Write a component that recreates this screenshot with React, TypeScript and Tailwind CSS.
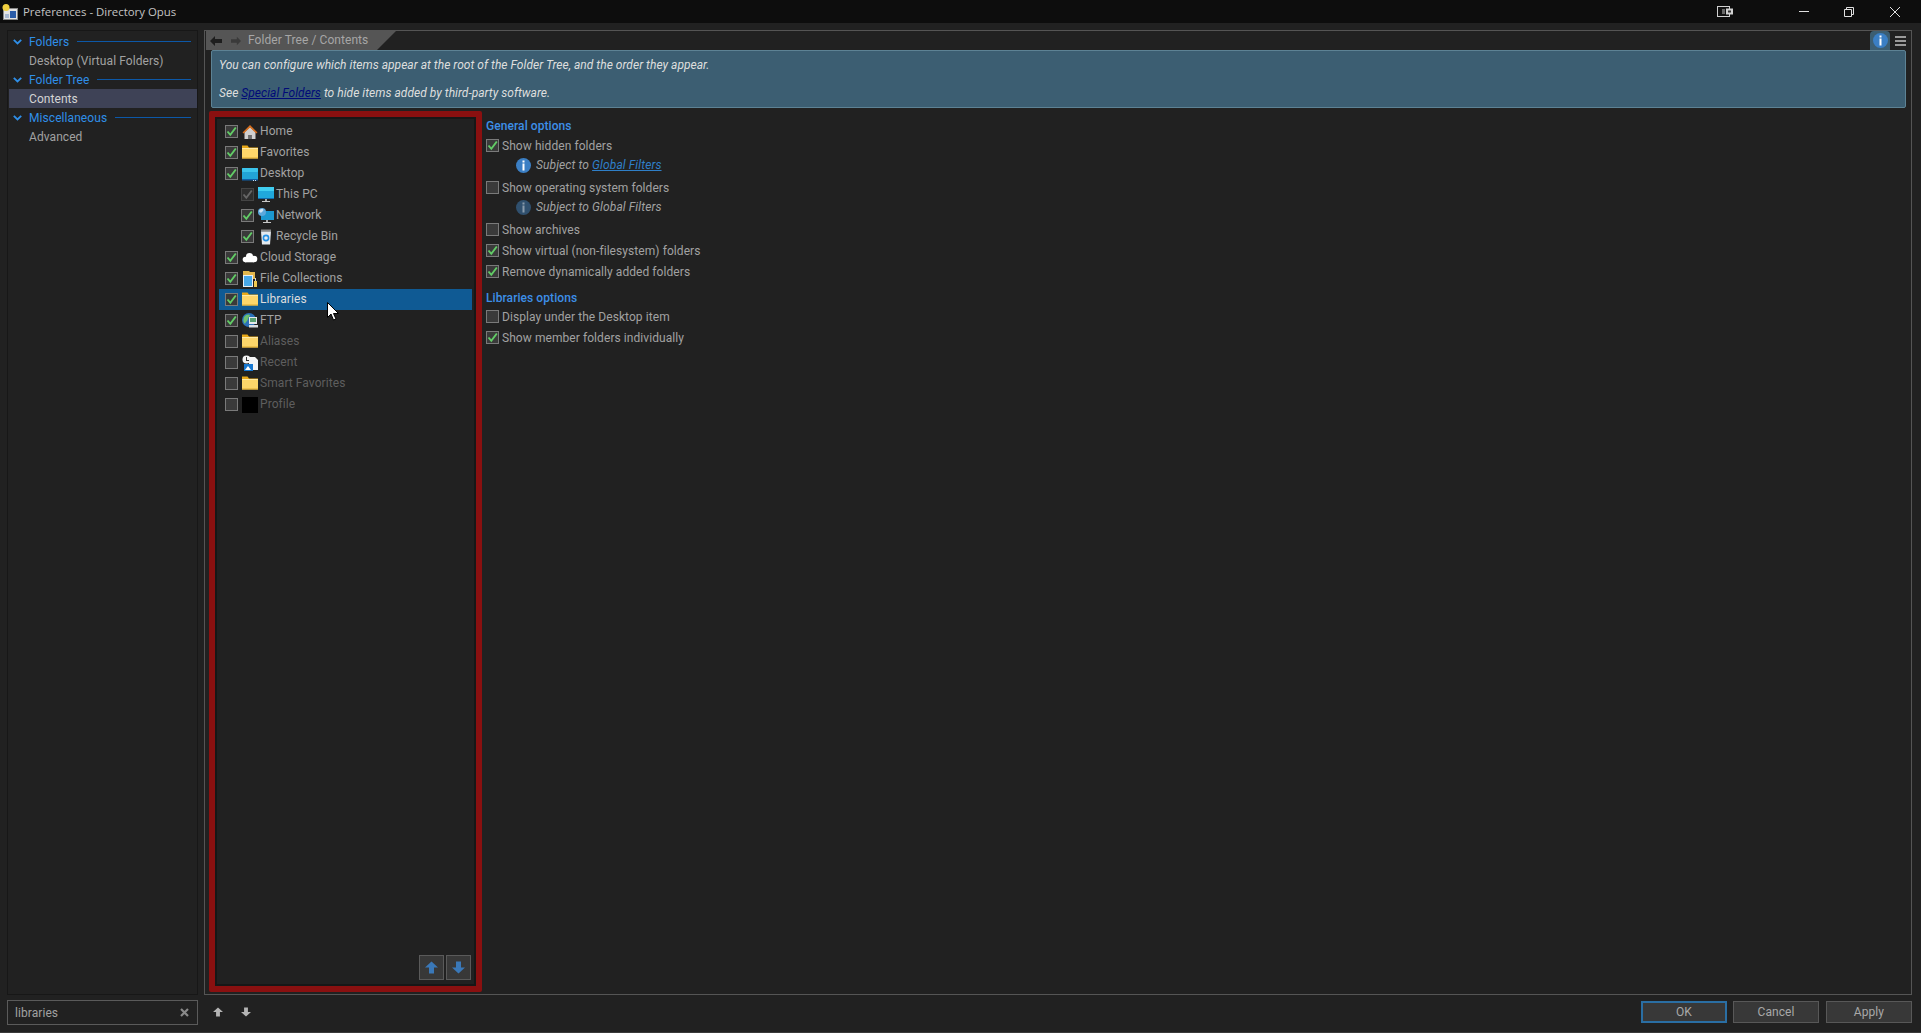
import type { ReactNode } from "react";

// small pictures used by the tree
const HomeIcon = () => (
  <svg width="16" height="16" viewBox="0 0 16 16">
    <path d="M2.500 8v7h4v-4h3v4h4V8L8 3z" fill="#d0d0d0" />
    <path d="M0.500 8.500 8 1l7.500 7.500-1.200 1L8 3.500 1.700 9.500z" fill="#d9701e" />
    <rect x="6.500" y="11" width="3" height="4" fill="#6c6c6c" />
  </svg>
);

const FolderIcon = () => (
  <svg width="16" height="16" viewBox="0 0 16 16">
    <path d="M0 0.500h5.500l1.500 2h9v1H0z" fill="#e8a818" />
    <rect x="0" y="3" width="16" height="10.500" fill="#fdd66a" />
    <rect x="0" y="3" width="16" height="1" fill="#ffe9a4" />
    <rect x="0" y="12.500" width="16" height="1" fill="#e0ac30" />
  </svg>
);

const DesktopIcon = () => (
  <svg width="16" height="16" viewBox="0 0 16 16">
    <rect x="0" y="2" width="16" height="12" rx="1" fill="#22a4d8" />
    <rect x="0" y="2" width="16" height="4" rx="1" fill="#3cc4ec" />
    <rect x="0" y="13" width="16" height="1.500" fill="#1060a8" />
    <rect x="11" y="14" width="1" height="1" fill="#cde" />
    <rect x="13" y="14" width="1" height="1" fill="#cde" />
  </svg>
);

const MonitorIcon = () => (
  <svg width="16" height="16" viewBox="0 0 16 16">
    <rect x="0" y="0" width="16" height="12" fill="#20a8dc" />
    <rect x="0" y="0" width="16" height="4" fill="#40cdf0" />
    <rect x="0" y="11" width="16" height="1" fill="#1068a8" />
    <rect x="7" y="12" width="2" height="2" fill="#a8a8a8" />
    <rect x="4" y="14" width="8" height="1" fill="#c8c8c8" />
  </svg>
);

const NetworkIcon = () => (
  <svg width="16" height="16" viewBox="0 0 16 16">
    <rect x="3" y="3" width="13" height="9" fill="#1c98d0" />
    <rect x="8" y="12" width="2" height="2" fill="#a8a8a8" />
    <rect x="5" y="14" width="8" height="1" fill="#c8c8c8" />
    <circle cx="4" cy="4" r="4" fill="#5ca8dc" />
    <path d="M1 3c1-2 3-2.500 4-2 1 1 0 2-1 3S2 5 1 3z" fill="#cfe4f4" />
  </svg>
);

const RecycleIcon = () => (
  <svg width="16" height="16" viewBox="0 0 16 16">
    <rect x="3" y="0.500" width="10" height="2" fill="#8a8a8a" />
    <path d="M3 2.500h10l-1 13H4z" fill="#e4e9ee" />
    <circle cx="8" cy="9" r="2.600" fill="none" stroke="#2490e4" strokeWidth="1.600" />
  </svg>
);

const CloudIcon = () => (
  <svg width="16" height="16" viewBox="0 0 16 16">
    <circle cx="3.500" cy="9.500" r="2.800" fill="#fff" />
    <circle cx="7.500" cy="6.500" r="3.500" fill="#fff" />
    <circle cx="12" cy="9" r="3.300" fill="#fff" />
    <rect x="3" y="8" width="9" height="4.300" fill="#fff" />
  </svg>
);

const CollectionIcon = () => (
  <svg width="16" height="16" viewBox="0 0 16 16">
    <path d="M1 3V0h6l1 1h5v7h-2v8H1z" fill="#e2b64c" />
    <rect x="1" y="4" width="10" height="12" fill="#e8eef2" />
    <rect x="2" y="5" width="8" height="10" fill="#48a8e8" />
    <rect x="12" y="10" width="3" height="6" fill="#f0c850" />
    <rect x="13" y="7" width="1" height="3" fill="#d8d8d8" />
  </svg>
);

const FtpIcon = () => (
  <svg width="16" height="16" viewBox="0 0 16 16">
    <circle cx="7" cy="7" r="7" fill="#2a70b8" />
    <path d="M2 4c2-3 5-3 6-2 0 2-2 2-2 4s-3 3-3 5c-2-2-2-4-1-7z" fill="#6cc070" />
    <rect x="7" y="4" width="8" height="7" fill="#e4e8ea" />
    <rect x="8" y="5" width="6" height="4" fill="#58a070" />
    <rect x="7" y="12" width="9" height="2.500" fill="#d8dce0" />
  </svg>
);

const RecentIcon = () => (
  <svg width="16" height="16" viewBox="0 0 16 16">
    <path d="M7 2h6l3 3v10H7z" fill="#f4f4f4" />
    <circle cx="4.500" cy="4.500" r="4" fill="#f4f4f4" />
    <path d="M4 2h1v3h2v1H4z" fill="#333" />
    <rect x="2" y="9" width="9" height="7" fill="#1878d0" />
    <path d="M3 15l3-4 3 4z" fill="#fff" />
  </svg>
);

const BlackIcon = () => <div className="h-4 w-4 bg-black" />;

const InfoDot = ({ dim }: { dim?: boolean }) => (
  <svg width="15" height="15" viewBox="0 0 15 15">
    <circle cx="7.500" cy="7.500" r="7.500" fill={dim ? "#30506e" : "#3b7fc4"} />
    <rect x="6.500" y="2.500" width="2" height="2" fill={dim ? "#8a9bab" : "#fff"} />
    <rect x="6.500" y="5.500" width="2" height="7" fill={dim ? "#8a9bab" : "#fff"} />
  </svg>
);

const Chevron = () => (
  <svg width="9" height="6" viewBox="0 0 9 6" className="ml-1 mr-[7px] shrink-0">
    <path d="M0.800 0.800 4.500 4.500 8.200 0.800" fill="none" stroke="#2f8fe8" strokeWidth="1.800" />
  </svg>
);

const Check = ({ on, muted }: { on: boolean; muted?: boolean }) => (
  <div
    className={
      muted
        ? "flex h-[13px] w-[13px] shrink-0 items-center justify-center border border-[#444444] bg-[#2e2e2e]"
        : "flex h-[13px] w-[13px] shrink-0 items-center justify-center border border-[#7a7a7a] bg-[#3a3a3a]"
    }
  >
    {on && (
      <svg width="11" height="11" viewBox="0 0 11 11">
        <path d="M1.500 5.500 4.300 8.800 9.800 1.500" fill="none" stroke={muted ? "#666666" : "#62cc66"} strokeWidth="1.900" />
      </svg>
    )}
  </div>
);

const UpArrow = ({ color, size = 13 }: { color: string; size?: number }) => (
  <svg width={size} height={size} viewBox="0 0 13 13">
    <path d="M6.500 0.500 13 6.500H9V12.500H4V6.500H0z" fill={color} />
  </svg>
);

const DownArrow = ({ color, size = 13 }: { color: string; size?: number }) => (
  <svg width={size} height={size} viewBox="0 0 13 13">
    <path d="M6.500 12.500 13 6.500H9V0.500H4V6.500H0z" fill={color} />
  </svg>
);

const treeItems: { label: string; icon: ReactNode; on: boolean; depth?: boolean; muted?: boolean; off?: boolean; active?: boolean }[] = [
  { label: "Home", icon: <HomeIcon />, on: true },
  { label: "Favorites", icon: <FolderIcon />, on: true },
  { label: "Desktop", icon: <DesktopIcon />, on: true },
  { label: "This PC", icon: <MonitorIcon />, on: true, depth: true, muted: true },
  { label: "Network", icon: <NetworkIcon />, on: true, depth: true },
  { label: "Recycle Bin", icon: <RecycleIcon />, on: true, depth: true },
  { label: "Cloud Storage", icon: <CloudIcon />, on: true },
  { label: "File Collections", icon: <CollectionIcon />, on: true },
  { label: "Libraries", icon: <FolderIcon />, on: true, active: true },
  { label: "FTP", icon: <FtpIcon />, on: true },
  { label: "Aliases", icon: <FolderIcon />, on: false, off: true },
  { label: "Recent", icon: <RecentIcon />, on: false, off: true },
  { label: "Smart Favorites", icon: <FolderIcon />, on: false, off: true },
  { label: "Profile", icon: <BlackIcon />, on: false, off: true },
];

const TreeRow = ({ item }: { item: (typeof treeItems)[number] }) => (
  <div className={item.active ? "flex h-[21px] items-center bg-[#0f5a94] pl-[6px] text-[#dcdcdc]" : item.off ? "flex h-[21px] items-center pl-[6px] text-[#5e5e5e]" : "flex h-[21px] items-center pl-[6px] text-[#a2a2a2]"}>
    {item.depth && <div className="w-4 shrink-0" />}
    <Check on={item.on} muted={item.muted} />
    <div className="ml-1 shrink-0">{item.icon}</div>
    <span className="mb-[2px] ml-[2px]">{item.label}</span>
  </div>
);

const Option = ({ label, on }: { label: string; on: boolean }) => (
  <div className="flex h-[21px] items-center text-[#a2a2a2]">
    <Check on={on} />
    <span className="ml-[3px]">{label}</span>
  </div>
);

const Note = ({ link, dim }: { link?: boolean; dim?: boolean }) => (
  <div className="flex h-[19px] items-center pl-[30px] italic tracking-[0.1px] text-[#a2a2a2]">
    <InfoDot dim={dim} />
    <span className="mb-px ml-[5px]">
      Subject to{" "}
      {link ? <span className="text-[#2f7fc8] underline">Global Filters</span> : "Global Filters"}
    </span>
  </div>
);

const SideHeader = ({ label }: { label: string }) => (
  <div className="flex h-[19px] items-center text-[#2f8fe8]">
    <Chevron />
    <span>{label}</span>
    <div className="ml-2 mr-[6px] h-px flex-1 bg-[#0c58a8]" />
  </div>
);

const SideItem = ({ label, active }: { label: string; active?: boolean }) => (
  <div className={active ? "flex h-[19px] items-center bg-[#3e4256] pl-5 text-[#d4d4d4]" : "flex h-[19px] items-center pl-5 text-[#a2a2a2]"}>
    {label}
  </div>
);

const FooterButton = ({ label, primary }: { label: string; primary?: boolean }) => (
  <div className={primary ? "flex h-[22px] w-[86px] items-center justify-center border-2 border-[#2a6ea3] bg-[#383838] text-[#a8a8a8]" : "flex h-[22px] w-[86px] items-center justify-center border border-[#585858] bg-[#383838] text-[#a8a8a8]"}>
    {label}
  </div>
);

export default function App() {
  return (
    <div className="relative flex h-screen w-screen flex-col overflow-hidden bg-[#212121] font-['Roboto',sans-serif] text-[12px] leading-none tracking-[0.07px]">
      {/* title bar */}
      <div className="flex h-[23px] shrink-0 items-center bg-[#0d0d0d] text-[#c4c4c4]">
        <svg width="16" height="16" viewBox="0 0 16 16" className="ml-[2px]">
          <rect x="1.500" y="4.500" width="14" height="11" fill="#e4e4e4" stroke="#8a8a8a" />
          <rect x="8" y="7" width="6" height="7" fill="#2a5ca8" />
          <rect x="3" y="10" width="4" height="4" fill="#a8b8d0" />
          <circle cx="4" cy="3.500" r="3.500" fill="#f0d040" />
        </svg>
        <span className="ml-[5px] font-['Open_Sans',sans-serif] text-[11.400px] tracking-normal">Preferences - Directory Opus</span>
        <div className="ml-auto flex items-center">
          <svg width="16" height="11" viewBox="0 0 16 11">
            <rect x="0.500" y="0.500" width="12" height="10" fill="#111" stroke="#d0d0d0" />
            <rect x="5" y="3" width="3" height="5" fill="#666" />
            <rect x="9" y="2.500" width="7" height="6" fill="#d0d0d0" />
            <rect x="11" y="4.500" width="3" height="2" fill="#333" />
          </svg>
          <svg width="10" height="1" viewBox="0 0 10 1" className="ml-[66px]">
            <rect width="10" height="1" fill="#e0e0e0" />
          </svg>
          <svg width="10" height="10" viewBox="0 0 10 10" className="ml-[35px]">
            <path d="M0.500 2.500h7v7h-7zM2.500 2.500v-2h7v7h-2" fill="none" stroke="#e0e0e0" />
          </svg>
          <svg width="10" height="10" viewBox="0 0 10 10" className="ml-[36px] mr-[21px]">
            <path d="M0 0 10 10M10 0 0 10" stroke="#e0e0e0" />
          </svg>
        </div>
      </div>

      <div className="flex min-h-0 flex-1 gap-[6px] pl-[7px] pr-[9px] pt-[7px]">
        {/* section list */}
        <div className="w-[191px] shrink-0 border border-[#171717] pl-px pt-px">
          <SideHeader label="Folders" />
          <SideItem label="Desktop (Virtual Folders)" />
          <SideHeader label="Folder Tree" />
          <SideItem label="Contents" active />
          <SideHeader label="Miscellaneous" />
          <SideItem label="Advanced" />
        </div>

        {/* page */}
        <div className="flex min-w-0 flex-1 flex-col border border-[#555555]">
          <div className="flex h-[19px] shrink-0 items-start justify-between pl-px">
            <div className="flex h-[19px] w-[190px] items-center bg-[#555555] pl-1 text-[#a6a6a6] [clip-path:polygon(0_0,100%_0,90%_100%,0_100%)]">
              <svg width="12" height="10" viewBox="0 0 12 10">
                <path d="M0 5 5 0v3h7v4H5v3z" fill="#1e1e1e" />
              </svg>
              <svg width="10" height="10" viewBox="0 0 12 10" className="ml-[9px]">
                <path d="M12 5 7 0v3H0v4h7v3z" fill="#3a3a3a" />
              </svg>
              <span className="mb-px ml-[7px]">Folder Tree / Contents</span>
            </div>
            <div className="mr-[5px] flex items-end">
              <div className="flex h-[19px] w-[20px] items-center justify-center rounded-t-[4px] bg-[#3c5e72]">
                <InfoDot />
              </div>
              <div className="mb-1 ml-[5px] flex w-[11px] flex-col gap-[2px]">
                <div className="h-[2px] bg-[#9a9a9a]" />
                <div className="h-[2px] bg-[#9a9a9a]" />
                <div className="h-[2px] bg-[#9a9a9a]" />
              </div>
            </div>
          </div>

          <div className="ml-[6px] mr-[5px] flex h-[58px] shrink-0 flex-col gap-[16px] rounded-[2px] border border-[#5d8294] bg-[#3c5e72] pl-[7px] pt-2 italic tracking-[0.03px] text-[#dedede]">
            <span className="h-3">You can configure which items appear at the root of the Folder Tree, and the order they appear.</span>
            <span className="h-3">
              See <span className="text-[#000a78] underline">Special Folders</span> to hide items added by third-party software.
            </span>
          </div>

          <div className="flex min-h-0 flex-1 pl-[4px] pt-[3px]">
            {/* red frame round the tree */}
            <div className="mb-[2px] flex w-[273px] shrink-0 flex-col rounded-[2px] border-[6px] border-[#8a1010]">
              <div className="flex min-h-0 flex-1 flex-col border-2 border-[#171717] pl-[2px] pr-[2px] pt-[2px]">
                {treeItems.map((item) => (
                  <TreeRow key={item.label} item={item} />
                ))}
                <div className="mb-1 mr-px mt-auto flex justify-end gap-[2px]">
                  <div className="flex h-[25px] w-[25px] items-center justify-center border border-[#5a5a5a] bg-[#383838]">
                    <UpArrow color="#3a78b8" />
                  </div>
                  <div className="flex h-[25px] w-[25px] items-center justify-center border border-[#5a5a5a] bg-[#383838]">
                    <DownArrow color="#3a78b8" />
                  </div>
                </div>
              </div>
            </div>

            {/* options */}
            <div className="ml-1 flex flex-col pt-[5px]">
              <div className="flex h-[19px] items-center font-medium text-[#3d8fe8]">General options</div>
              <Option label="Show hidden folders" on />
              <Note link />
              <div className="mt-[2px]">
                <Option label="Show operating system folders" on={false} />
              </div>
              <Note dim />
              <div className="mt-[2px]">
                <Option label="Show archives" on={false} />
              </div>
              <Option label="Show virtual (non-filesystem) folders" on />
              <Option label="Remove dynamically added folders" on />
              <div className="mt-[7px] flex h-[17px] items-center font-medium text-[#3d8fe8]">Libraries options</div>
              <Option label="Display under the Desktop item" on={false} />
              <Option label="Show member folders individually" on />
            </div>
          </div>
        </div>
      </div>

      {/* bottom bar */}
      <div className="flex h-[38px] shrink-0 items-start border-b border-[#3a3a3a] pl-[7px] pr-[9px] pt-[5px]">
        <div className="flex h-[25px] w-[191px] items-center justify-between border border-[#5a5a5a] pl-[7px] pr-[8px] text-[#a2a2a2]">
          <span>libraries</span>
          <svg width="9" height="9" viewBox="0 0 9 9">
            <path d="M1 1 8 8M8 1 1 8" stroke="#8a8a8a" strokeWidth="2.200" />
          </svg>
        </div>
        <div className="ml-[15px] mt-[7px]">
          <UpArrow color="#b4b4b4" size={10} />
        </div>
        <div className="ml-[18px] mt-[7px]">
          <DownArrow color="#b4b4b4" size={10} />
        </div>
        <div className="ml-auto mt-px flex">
          <div className="mr-[6px]">
            <FooterButton label="OK" primary />
          </div>
          <div className="mr-[7px]">
            <FooterButton label="Cancel" />
          </div>
          <FooterButton label="Apply" />
        </div>
      </div>

      {/* mouse pointer over the list */}
      <svg width="13" height="19" viewBox="0 0 13 19" className="absolute left-[327px] top-[302px]">
        <path d="M0.500 0.500v15l3.500-3.500 2.500 6 2.500-1-2.500-5.500h5z" fill="#fff" stroke="#000" />
      </svg>
    </div>
  );
}
